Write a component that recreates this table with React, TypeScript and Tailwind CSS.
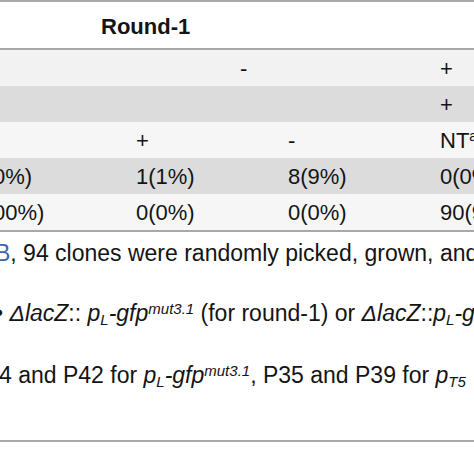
import React from 'react';

const rows = [
  { bg: 'bg-[#f2f2f2]', cells: ['', '', '-', '+'], offsets: true },
  { bg: 'bg-[#dcdcdc]', cells: ['', '', '', '+'] },
  { bg: 'bg-[#f6f6f6]', cells: ['', '+', '-', 'NT'], sup: 'a' },
  { bg: 'bg-[#dcdcdc]', cells: ['85(90%)', '1(1%)', '8(9%)', '0(0%)'] },
  { bg: 'bg-[#f6f6f6]', cells: ['94(100%)', '0(0%)', '0(0%)', '90(96%)'] },
];

function Row({ row }: { row: (typeof rows)[number] }) {
  if (row.offsets) {
    return (
      <div className={`h-[36px] flex items-center whitespace-nowrap ${row.bg}`}>
        <span className="w-[240px] shrink-0" />
        <span className="w-[200px] shrink-0">{row.cells[2]}</span>
        <span>{row.cells[3]}</span>
      </div>
    );
  }
  return (
    <div className={`h-[36px] flex items-center whitespace-nowrap ${row.bg}`}>
      <span className="w-[187px] ml-[-51px] shrink-0">{row.cells[0]}</span>
      <span className="w-[152px] shrink-0">{row.cells[1]}</span>
      <span className="w-[152px] shrink-0">{row.cells[2]}</span>
      <span className="shrink-0">
        {row.cells[3]}
        {row.sup && <sup className="text-[14px]">{row.sup}</sup>}
      </span>
    </div>
  );
}

function PL() {
  return (
    <i>
      p<sub className="text-[15px]">L</sub>
    </i>
  );
}

export default function App() {
  return (
    <div className="w-[474px] h-[474px] overflow-hidden bg-white text-[22px] text-[#141414] font-['Liberation_Sans',Arial,sans-serif]">
      <div className="h-[2px] bg-[#a8a8a8]" />
      <div className="h-[46px] flex items-center pl-[101px] pt-[2px] font-bold">Round-1</div>
      <div className="h-[2px] bg-[#a8a8a8]" />
      {rows.map((row, i) => (
        <Row key={i} row={row} />
      ))}
      <div className="h-[2px] bg-[#a8a8a8]" />

      <div className="h-[201px] whitespace-nowrap leading-[28px] text-[23px]">
        <p className="mt-[7px] ml-[-5px]">
          <span className="text-[#3b66b0]">B</span>, 94 clones were randomly picked, grown, and analyzed
        </p>
        <p className="mt-[32px] ml-[-5px]">
          • <i>ΔlacZ</i>:: <PL />
          <i>-gfp</i>
          <sup className="text-[15px] italic">mut3.1</sup> (for round-1) or <i>ΔlacZ</i>::<PL />
          <i>-gfp</i>
        </p>
        <p className="mt-[34px] ml-[-1px]">
          4 and P42 for <PL />
          <i>-gfp</i>
          <sup className="text-[15px] italic">mut3.1</sup>, P35 and P39 for{' '}
          <i>
            p<sub className="text-[15px]">T5</sub>
          </i>
        </p>
      </div>
      <div className="h-[2px] bg-[#a8a8a8]" />
    </div>
  );
}
